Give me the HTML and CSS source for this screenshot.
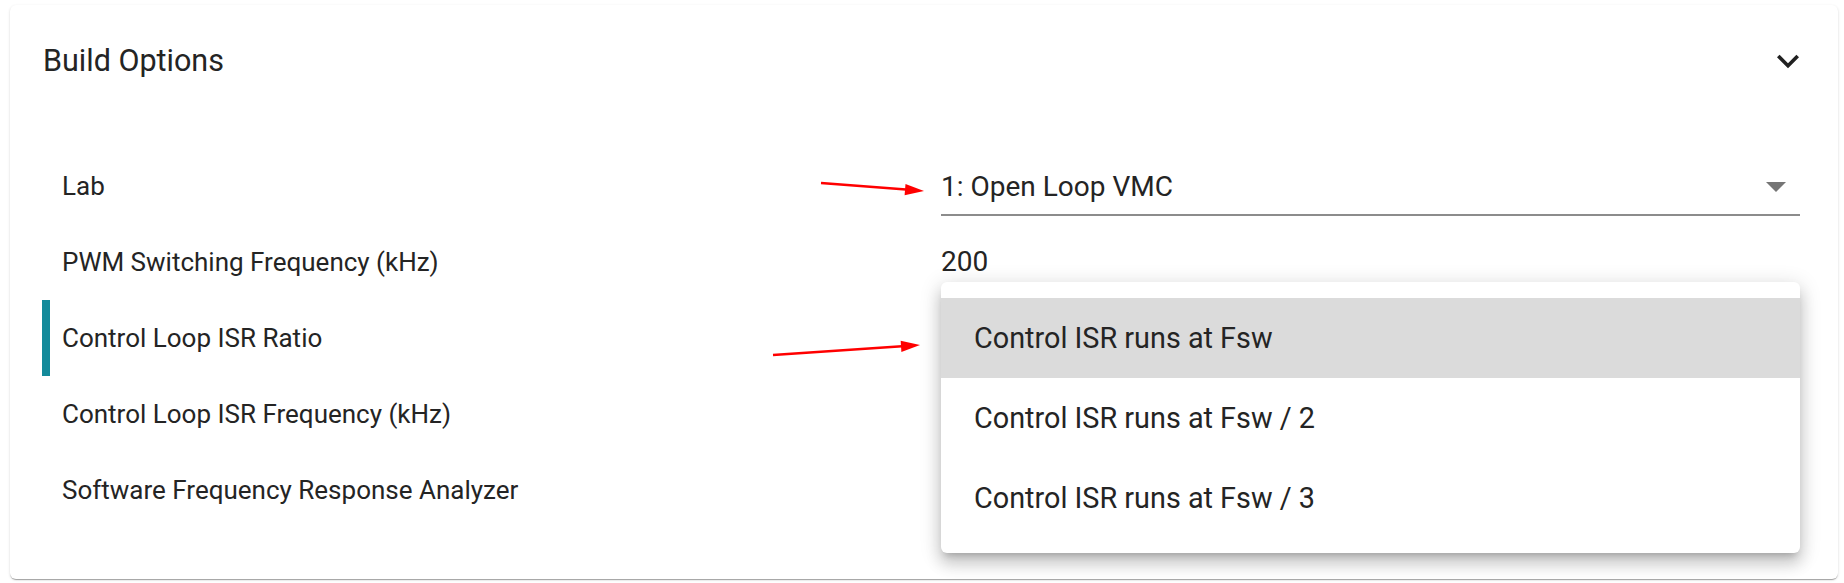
FILE: index.html
```html
<!DOCTYPE html>
<html lang="en">
<head>
<meta charset="utf-8">
<title>Build Options</title>
<link rel="stylesheet" href="styles.css">
</head>
<body>
<div class="page">
  <section class="card">
    <header class="card-header">
      <h2 class="card-title">Build Options</h2>
      <svg class="chevron" viewBox="0 0 24 24" width="44" height="44"><path d="M7.41 8.59L12 13.17l4.59-4.58L18 10l-6 6-6-6 1.41-1.41z"/></svg>
    </header>
    <div class="card-body">
      <div class="row">
        <div class="label">Lab</div>
        <div class="value">
          <div class="select">
            <span class="select-text">1: Open Loop VMC</span>
            <svg class="select-arrow" viewBox="0 0 20 10" width="20" height="10"><polygon points="0,0 20,0 10,10"/></svg>
          </div>
        </div>
      </div>
      <div class="row">
        <div class="label">PWM Switching Frequency (kHz)</div>
        <div class="value"><span class="value-text">200</span></div>
      </div>
      <div class="row active">
        <div class="label">Control Loop ISR Ratio</div>
        <div class="value"></div>
      </div>
      <div class="row">
        <div class="label">Control Loop ISR Frequency (kHz)</div>
        <div class="value"></div>
      </div>
      <div class="row">
        <div class="label">Software Frequency Response Analyzer</div>
        <div class="value"></div>
      </div>
    </div>
    <ul class="menu">
      <li class="menu-item selected">Control ISR runs at Fsw</li>
      <li class="menu-item">Control ISR runs at Fsw / 2</li>
      <li class="menu-item">Control ISR runs at Fsw / 3</li>
    </ul>
  </section>
  <svg class="annotations" viewBox="0 0 1844 583" width="1844" height="583">
    <line x1="821" y1="183" x2="906" y2="189.6" class="arrow-line"/>
    <polygon points="924,191 904.6,195.2 905.5,184" class="arrow-head"/>
    <line x1="773" y1="355" x2="902" y2="346.2" class="arrow-line"/>
    <polygon points="920,345 901.4,351.9 900.7,340.8" class="arrow-head"/>
  </svg>
</div>
</body>
</html>
```
FILE: styles.css
```css
* { box-sizing: border-box; }
html, body { margin: 0; padding: 0; background: #ffffff; }
body {
  font-family: Roboto, "Noto Sans", "Liberation Sans", sans-serif;
  color: #242424;
  width: 1844px;
  height: 583px;
  overflow: hidden;
}
.page {
  position: relative;
  padding: 5px 6px 4px 10px;
  height: 583px;
}
.card {
  position: relative;
  height: 574px;
  background: #fff;
  border-radius: 6px;
  box-shadow: 0 2px 1px -1px rgba(0,0,0,.2), 0 1px 1px 0 rgba(0,0,0,.14), 0 1px 3px 0 rgba(0,0,0,.12);
  display: flex;
  flex-direction: column;
}
.card-header {
  height: 112px;
  display: flex;
  align-items: center;
  justify-content: space-between;
  padding: 0 28px 0 33px;
}
.card-title {
  margin: 0;
  font-size: 30.5px;
  font-weight: 400;
  line-height: 40px;
}
.chevron { fill: #212121; display: block; }
.card-body {
  padding: 31px 38px 0 32px;
  display: flex;
  flex-direction: column;
}
.row {
  height: 76px;
  display: grid;
  grid-template-columns: 891px 1fr;
  align-items: center;
  border-left: 8px solid transparent;
}
.row.active { border-left-color: #138a9a; }
.label {
  padding-left: 12px;
  font-size: 26px;
  line-height: 34px;
}
.value { font-size: 28px; line-height: 36px; height: 100%; display: flex; align-items: center; }
.value-text { display: block; }
.select {
  align-self: flex-start;
  margin-top: 21px;
  width: 100%;
  display: flex;
  align-items: center;
  justify-content: space-between;
  padding: 0 14px 9px 0;
  border-bottom: 2px solid #8c8c8c;
}
.select-text { line-height: 36px; }
.select-arrow { fill: #757575; display: block; }
.menu {
  position: absolute;
  left: 931px;
  top: 277px;
  width: 859px;
  margin: 0;
  padding: 16px 0 15px;
  list-style: none;
  background: #fff;
  border-radius: 6px;
  box-shadow: 0 6px 7px -4px rgba(0,0,0,.2), 0 11px 15px 1px rgba(0,0,0,.14), 0 4px 20px 3px rgba(0,0,0,.12);
}
.menu-item {
  height: 80px;
  display: flex;
  align-items: center;
  padding-left: 33px;
  font-size: 28.8px;
}
.menu-item.selected { background: #dbdbdb; }
.annotations {
  position: absolute;
  left: 0;
  top: 0;
  pointer-events: none;
}
.arrow-line { stroke: #ff0000; stroke-width: 2.5; }
.arrow-head { fill: #ff0000; }
```
